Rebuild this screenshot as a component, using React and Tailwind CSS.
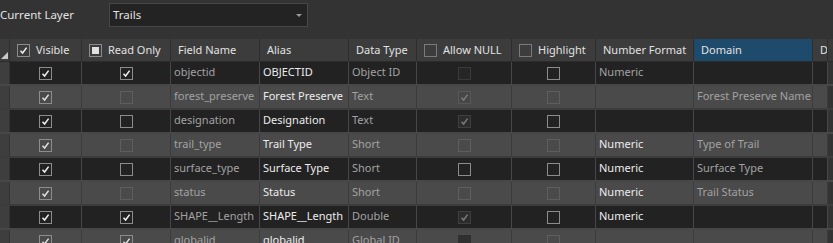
import React from 'react';

const FONT = { fontFamily: '"Noto Sans", "Open Sans", sans-serif' };

// column widths taken from the grid separators
const COLS = [10, 72, 89, 89, 89, 68, 95, 84, 98, 119, 15];

const rows = [
  { dark: true, vis: 'on', ro: 'on', field: 'objectid', alias: 'OBJECTID', type: 'Object ID', an: 'offDis', hl: 'off', nf: 'Numeric', nfDim: true, domain: '' },
  { dark: false, vis: 'on', ro: 'offDis', field: 'forest_preserve', alias: 'Forest Preserve', type: 'Text', an: 'onDis', hl: 'offDis', nf: '', domain: 'Forest Preserve Name' },
  { dark: true, vis: 'on', ro: 'off', field: 'designation', alias: 'Designation', type: 'Text', an: 'onDis', hl: 'off', nf: '', domain: '' },
  { dark: false, vis: 'on', ro: 'offDis', field: 'trail_type', alias: 'Trail Type', type: 'Short', an: 'offDis', hl: 'offDis', nf: 'Numeric', domain: 'Type of Trail' },
  { dark: true, vis: 'on', ro: 'off', field: 'surface_type', alias: 'Surface Type', type: 'Short', an: 'off', hl: 'off', nf: 'Numeric', domain: 'Surface Type' },
  { dark: false, vis: 'on', ro: 'offDis', field: 'status', alias: 'Status', type: 'Short', an: 'offDis', hl: 'offDis', nf: 'Numeric', domain: 'Trail Status' },
  { dark: true, vis: 'on', ro: 'on', field: 'SHAPE__Length', alias: 'SHAPE__Length', type: 'Double', an: 'onDis', hl: 'off', nf: 'Numeric', domain: '' },
  { dark: false, vis: 'on', ro: 'on', field: 'globalid', alias: 'globalid', type: 'Global ID', an: 'fill', hl: 'offDis', nf: '', domain: '' },
];

function Tick({ color }) {
  return (
    <svg width="11" height="11" viewBox="0 0 11 11" className="block">
      <path d="M2.5 5.8 L4.6 8 L8.6 2.6" fill="none" stroke={color} strokeWidth="1.5" />
    </svg>
  );
}

function Box({ state, dark }) {
  if (state === 'fill') {
    return <div className="w-[13px] h-[13px] bg-[#303030]" />;
  }
  if (state === 'on') {
    return (
      <div className="w-[13px] h-[13px] border border-[#8c8c8c] flex items-center justify-center">
        <Tick color={dark ? '#f2f2f2' : '#e0e0e0'} />
      </div>
    );
  }
  if (state === 'onDis') {
    return (
      <div className={`w-[13px] h-[13px] border flex items-center justify-center ${dark ? 'border-[#3e3e3e] bg-[#2c2c2c]' : 'border-[#585858] bg-[#474747]'}`}>
        <Tick color="#7c7c7c" />
      </div>
    );
  }
  if (state === 'offDis') {
    return <div className={`w-[13px] h-[13px] border ${dark ? 'border-[#3a3a3a] bg-[#262626]' : 'border-[#5e5e5e]'}`} />;
  }
  return <div className="w-[13px] h-[13px] border border-[#8c8c8c]" />;
}

function Cell({ w, dark, children, center }) {
  return (
    <div
      className={`h-full shrink-0 flex items-center overflow-hidden whitespace-nowrap border-r ${dark ? 'bg-[#222222] border-[#474747]' : 'bg-[#4a4a4a] border-[#3c3c3c]'} ${center ? 'justify-center' : 'pl-[3px] pb-[2px]'}`}
      style={{ width: w }}
    >
      {children}
    </div>
  );
}

function HeadCell({ w, children, selected }) {
  return (
    <div
      className={`h-full shrink-0 flex items-center gap-[6px] pl-[7px] border-r border-[#2e2e2e] whitespace-nowrap overflow-hidden ${selected ? 'bg-[#1e4a6b]' : ''}`}
      style={{ width: w }}
    >
      {children}
    </div>
  );
}

export default function App() {
  return (
    <div className="w-[833px] h-[243px] overflow-hidden bg-[#333333] text-[11px] text-[#e2e2e2]" style={FONT}>
      {/* layer picker */}
      <div className="h-[39px] flex items-start pt-[3px]">
        <div className="w-[109px] h-[24px] flex items-center text-[11.5px]">Current Layer</div>
        <div className="w-[199px] h-[24px] bg-[#232323] border border-[#474747] flex items-center justify-between pl-[3px] pr-[5px] text-[11.5px]">
          <span>Trails</span>
          <div className="w-0 h-0 border-l-[3px] border-r-[3px] border-t-[3px] border-l-transparent border-r-transparent border-t-[#9a9a9a]" />
        </div>
      </div>

      {/* column headers */}
      <div className="h-[23px] flex bg-[#3c3c3c] border-b border-[#2c2c2c]">
        <div className="h-full shrink-0 border-r border-[#2e2e2e] flex items-end justify-end pb-[2px] pr-[1px]" style={{ width: COLS[0] }}>
          <div className="w-0 h-0 border-l-[7px] border-b-[7px] border-l-transparent border-b-[#c8c8c8]" />
        </div>
        <HeadCell w={COLS[1]}>
          <Box state="on" dark />
          <span>Visible</span>
        </HeadCell>
        <HeadCell w={COLS[2]}>
          <div className="w-[13px] h-[13px] border border-[#8c8c8c] p-[2px]">
            <div className="w-full h-full bg-[#e0e0e0]" />
          </div>
          <span>Read Only</span>
        </HeadCell>
        <HeadCell w={COLS[3]}>Field Name</HeadCell>
        <HeadCell w={COLS[4]}>Alias</HeadCell>
        <HeadCell w={COLS[5]}>Data Type</HeadCell>
        <HeadCell w={COLS[6]}>
          <div className="w-[13px] h-[13px] border border-[#7a7a7a]" />
          <span>Allow NULL</span>
        </HeadCell>
        <HeadCell w={COLS[7]}>
          <div className="w-[13px] h-[13px] border border-[#7a7a7a]" />
          <span>Highlight</span>
        </HeadCell>
        <HeadCell w={COLS[8]}>Number Format</HeadCell>
        <HeadCell w={COLS[9]} selected>Domain</HeadCell>
        <HeadCell w={COLS[10]}>D</HeadCell>
        <div className="flex-1 bg-[#3a3a3a]" />
      </div>

      {/* field rows */}
      {rows.map((r) => {
        const d = r.dark;
        return (
          <div key={r.field} className={`h-[24px] flex border-b-2 ${d ? 'border-[#474747]' : 'border-[#3c3c3c]'}`}>
            <div className="h-full shrink-0 bg-[#3e3e3e] border-r border-[#343434]" style={{ width: COLS[0] }} />
            <Cell w={COLS[1]} dark={d} center><Box state={r.vis} dark={d} /></Cell>
            <Cell w={COLS[2]} dark={d} center><Box state={r.ro} dark={d} /></Cell>
            <Cell w={COLS[3]} dark={d}><span className="text-[#a2a2a2]">{r.field}</span></Cell>
            <Cell w={COLS[4]} dark={d}><span className="text-[#ececec]">{r.alias}</span></Cell>
            <Cell w={COLS[5]} dark={d}><span className="text-[#a2a2a2]">{r.type}</span></Cell>
            <Cell w={COLS[6]} dark={d} center><Box state={r.an} dark={d} /></Cell>
            <Cell w={COLS[7]} dark={d} center><Box state={r.hl} dark={d} /></Cell>
            <Cell w={COLS[8]} dark={d}><span className={r.nfDim ? 'text-[#a2a2a2]' : 'text-[#ececec]'}>{r.nf}</span></Cell>
            <Cell w={COLS[9]} dark={d}><span className="text-[#a2a2a2]">{r.domain}</span></Cell>
            <Cell w={COLS[10]} dark={d} />
            <div className="flex-1 bg-[#333333]" />
          </div>
        );
      })}
    </div>
  );
}
